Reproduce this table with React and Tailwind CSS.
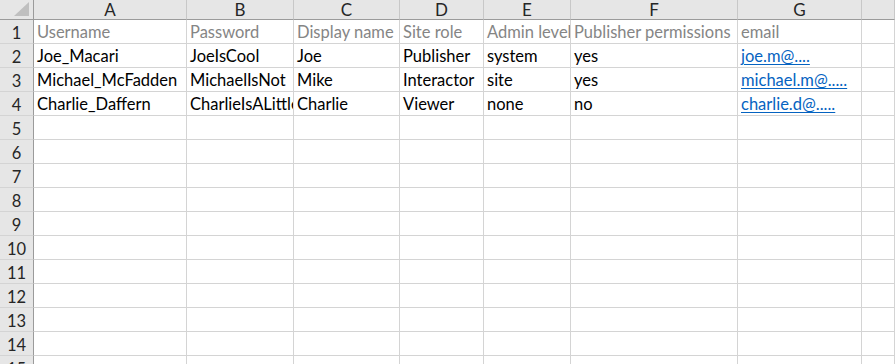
import React from "react";

const cols = ["A", "B", "C", "D", "E", "F", "G", ""];

const rows = [
  ["Username", "Password", "Display name", "Site role", "Admin level", "Publisher permissions", "email", ""],
  ["Joe_Macari", "JoeIsCool", "Joe", "Publisher", "system", "yes", "joe.m@....", ""],
  ["Michael_McFadden", "MichaelIsNot", "Mike", "Interactor", "site", "yes", "michael.m@.....", ""],
  ["Charlie_Daffern", "CharlieIsALittle", "Charlie", "Viewer", "none", "no", "charlie.d@.....", ""],
];

const gridCols = "grid grid-cols-[34px_153px_107px_106px_84px_87px_167px_124px_1fr]";
const font = { fontFamily: "Lato, 'Liberation Sans', sans-serif" };

export default function App() {
  const bodyRows = [];
  for (let r = 1; r <= 15; r++) {
    const data = rows[r - 1] || [];
    bodyRows.push(
      <React.Fragment key={r}>
        <div className="h-6 bg-[#e6e6e6] border-r border-r-[#9b9b9b] border-b border-b-[#d4d4d4] flex items-end justify-center pb-[2px] text-[16.5px] text-[#262626] leading-none">
          {r}
        </div>
        {cols.map((c, i) => {
          const text = data[i] || "";
          const isHead = r === 1;
          const isLink = !isHead && i === 6 && text;
          return (
            <div
              key={i}
              className={
                "h-6 border-r border-b border-[#d4d4d4] flex items-end pl-[3px] pb-[3px] text-[16.5px] leading-none whitespace-nowrap overflow-hidden " +
                (isHead ? "text-[#858585]" : isLink ? "text-[#0563c1]" : "text-black")
              }
            >
              {isLink ? (
                <span className="underline underline-offset-2 decoration-1">{text}</span>
              ) : (
                text
              )}
            </div>
          );
        })}
      </React.Fragment>
    );
  }

  return (
    <div className="w-[895px] h-[364px] overflow-hidden bg-white" style={font}>
      <div className={gridCols}>
        <div className="h-5 bg-[#e6e6e6] border-r border-r-[#9b9b9b] border-b border-b-[#9b9b9b] relative">
          <svg className="absolute left-0 top-0" width="33" height="19" viewBox="0 0 33 19">
            <polygon points="14,16 29,16 29,2" fill="#bfbfbf" />
          </svg>
        </div>
        {cols.map((c, i) => (
          <div
            key={i}
            className="h-5 bg-[#e6e6e6] border-r border-r-[#c8c8c8] border-b border-b-[#9b9b9b] flex items-center justify-center text-[17px] text-[#262626] leading-none"
          >
            {c}
          </div>
        ))}
        {bodyRows}
      </div>
    </div>
  );
}
